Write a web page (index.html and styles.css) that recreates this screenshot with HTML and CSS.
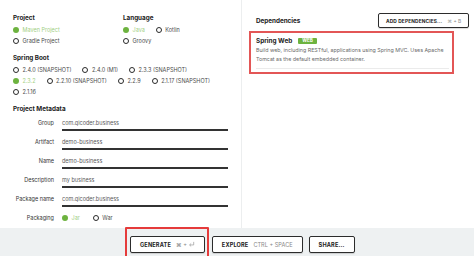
FILE: index.html
```html
<!DOCTYPE html>
<html>
<head>
<meta charset="utf-8">
<link rel="stylesheet" href="styles.css">
</head>
<body>
<div class="main">
  <div class="left">
    <div class="pair">
      <section class="group">
        <h2 class="heading">Project</h2>
        <div class="line"><span class="opt on"><span class="radio"></span>Maven Project</span></div>
        <div class="line"><span class="opt"><span class="radio"></span>Gradle Project</span></div>
      </section>
      <section class="group">
        <h2 class="heading">Language</h2>
        <div class="line"><span class="opt on"><span class="radio"></span>Java</span><span class="opt"><span class="radio"></span>Kotlin</span></div>
        <div class="line"><span class="opt"><span class="radio"></span>Groovy</span></div>
      </section>
    </div>
    <section class="group gap">
      <h2 class="heading">Spring Boot</h2>
      <div class="line"><span class="opt"><span class="radio"></span>2.4.0 (SNAPSHOT)</span><span class="opt"><span class="radio"></span>2.4.0 (M1)</span><span class="opt"><span class="radio"></span>2.3.3 (SNAPSHOT)</span></div>
      <div class="line"><span class="opt on"><span class="radio"></span>2.3.2</span><span class="opt"><span class="radio"></span>2.2.10 (SNAPSHOT)</span><span class="opt"><span class="radio"></span>2.2.9</span><span class="opt"><span class="radio"></span>2.1.17 (SNAPSHOT)</span></div>
      <div class="line"><span class="opt"><span class="radio"></span>2.1.16</span></div>
    </section>
    <section class="group gap">
      <h2 class="heading">Project Metadata</h2>
      <div class="meta">
        <span class="mlabel">Group</span><span class="minput">com.qicoder.business</span>
        <span class="mlabel">Artifact</span><span class="minput">demo-business</span>
        <span class="mlabel">Name</span><span class="minput">demo-business</span>
        <span class="mlabel">Description</span><span class="minput">my business</span>
        <span class="mlabel">Package name</span><span class="minput">com.qicoder.business</span>
        <span class="mlabel">Packaging</span><span class="mradios"><span class="opt on"><span class="radio"></span>Jar</span><span class="opt"><span class="radio"></span>War</span></span>
      </div>
    </section>
  </div>
  <div class="right">
    <div class="dephead">
      <h2 class="heading">Dependencies</h2>
      <button class="btn small"><b>ADD DEPENDENCIES...</b><span class="key">⌘ + B</span></button>
    </div>
    <div class="deps">
      <div class="dep">
        <div class="deptitle">Spring Web <span class="badge">WEB</span></div>
        <p class="depdesc">Build web, including RESTful, applications using Spring MVC. Uses Apache Tomcat as the default embedded container.</p>
      </div>
    </div>
  </div>
</div>
<div class="bar">
  <span class="hl"><button class="btn"><b>GENERATE</b><span class="key">⌘ + <svg class="ret" viewBox="0 0 8 8" width="7" height="7"><path d="M6.5 1v3.5H2 M3.6 2.8L1.8 4.5 3.6 6.2" fill="none" stroke="#9a9a9a" stroke-width="0.8"/></svg></span></button></span>
  <button class="btn"><b>EXPLORE</b><span class="key">CTRL + SPACE</span></button>
  <button class="btn"><b>SHARE...</b></button>
</div>
</body>
</html>
```

FILE: styles.css
```css
html, body {
  margin: 0;
  padding: 0;
}
body {
  width: 474px;
  height: 256px;
  overflow: hidden;
  background: #fff;
  color: #333;
  font-family: Inter, "DejaVu Sans", sans-serif;
  display: flex;
  flex-direction: column;
}
.main {
  display: flex;
  height: 228px;
  flex: none;
}
.left {
  width: 241px;
  box-sizing: border-box;
  padding: 13px 13px 0 13px;
}
.pair {
  display: grid;
  grid-template-columns: 110px 1fr;
}
.heading {
  margin: 0 0 1px 0;
  font-size: 6.3px;
  line-height: 10px;
  font-weight: 700;
  color: #222;
}
.gap {
  margin-top: 7px;
}
.line {
  display: flex;
  align-items: center;
  gap: 11px;
  height: 11px;
}
.opt {
  display: inline-flex;
  align-items: center;
  gap: 3.5px;
  font-size: 5.5px;
  color: #4a4a4a;
  white-space: nowrap;
}
.radio {
  width: 6px;
  height: 6px;
  box-sizing: border-box;
  border-radius: 50%;
  border: 1.3px solid #2a2a2a;
  flex: none;
}
.opt.on {
  color: #a3cf84;
}
.opt.on .radio {
  border: none;
  background: #6db33f;
}
.meta {
  display: grid;
  grid-template-columns: 41px 166px;
  column-gap: 8px;
  row-gap: 3px;
}
.mlabel {
  font-size: 5.5px;
  line-height: 10px;
  padding-top: 3px;
  text-align: right;
  color: #333;
  white-space: nowrap;
}
.minput {
  font-size: 5.5px;
  line-height: 10px;
  padding: 3px 0 1px 0;
  border-bottom: 2px solid #333;
  color: #5a5a5a;
}
.mradios {
  display: flex;
  gap: 13px;
  height: 10px;
  align-items: center;
  padding-top: 3px;
}
.right {
  flex: 1;
  border-left: 1px solid #eceeef;
  padding: 13px 5px 0 7px;
}
.dephead {
  display: flex;
  justify-content: space-between;
  align-items: center;
  height: 15px;
}
.dephead .heading {
  margin: 0 0 0 7px;
}
.btn {
  font-family: inherit;
  display: inline-flex;
  align-items: center;
  gap: 5px;
  height: 17px;
  box-sizing: border-box;
  padding: 0 9px;
  border: 1px solid #2c2c2c;
  border-radius: 2px;
  background: #fff;
  box-shadow: 0 1px 1px rgba(0, 0, 0, 0.15);
  color: #222;
  font-size: 5.6px;
  white-space: nowrap;
}
.btn b {
  font-weight: 700;
  letter-spacing: 0.15px;
}
.btn .key {
  color: #888;
  font-weight: 400;
  display: inline-flex;
  align-items: center;
  gap: 1px;
}
.btn.small {
  height: 15px;
  width: 91px;
  padding: 0 7px;
  font-size: 4.8px;
  justify-content: space-between;
}
.deps {
  margin-top: 3px;
  width: 205px;
  box-sizing: border-box;
  border: 2px solid #e35656;
  padding: 3px 3px 3px 5px;
}
.dep {
  border-bottom: 1px solid #ebebeb;
  padding-bottom: 4px;
}
.deptitle {
  font-size: 6.4px;
  font-weight: 700;
  line-height: 10px;
  color: #222;
  display: flex;
  align-items: center;
  gap: 6px;
}
.badge {
  background: #6db33f;
  color: #fff;
  font-size: 4.6px;
  font-weight: 700;
  line-height: 6px;
  padding: 0 4px;
  border-radius: 1px;
}
.depdesc {
  margin: 0;
  font-size: 5.3px;
  line-height: 9px;
  color: #6a6a6a;
}
.bar {
  flex: 1;
  background: #eef1f2;
  display: flex;
  align-items: flex-start;
  gap: 7px;
  padding: 8px 0 0 130px;
}
.bar .btn + .btn {
  margin-left: -1px;
}
.hl {
  position: relative;
  display: inline-flex;
}
.hl::before {
  content: "";
  position: absolute;
  top: -9px;
  left: -5px;
  right: -4px;
  bottom: -6px;
  border: 2px solid #e53b3b;
  border-radius: 1px;
}
.ret {
  display: block;
}
```
